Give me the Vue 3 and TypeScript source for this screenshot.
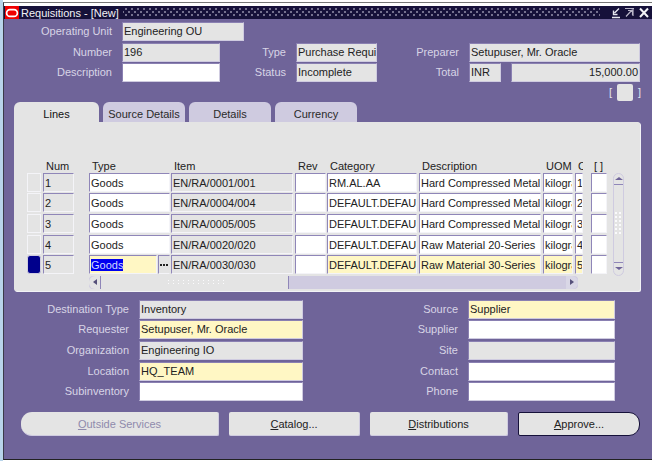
<script setup lang="ts">
interface LineRow {
  num: number;
  item: string;
  category: string;
  description: string;
  active?: boolean;
}

const lines: LineRow[] = [
  { num: 1, item: 'EN/RA/0001/001', category: 'RM.AL.AA', description: 'Hard Compressed Metal Sheet' },
  { num: 2, item: 'EN/RA/0004/004', category: 'DEFAULT.DEFAULT', description: 'Hard Compressed Metal Sheet' },
  { num: 3, item: 'EN/RA/0005/005', category: 'DEFAULT.DEFAULT', description: 'Hard Compressed Metal Sheet' },
  { num: 4, item: 'EN/RA/0020/020', category: 'DEFAULT.DEFAULT', description: 'Raw Material 20-Series' },
  { num: 5, item: 'EN/RA/0030/030', category: 'DEFAULT.DEFAULT', description: 'Raw Material 30-Series', active: true },
];

const tabs = ['Lines', 'Source Details', 'Details', 'Currency'];

interface LowerField {
  label: string;
  value: string;
  tone: string;
}

const leftFields: LowerField[] = [
  { label: 'Destination Type', value: 'Inventory', tone: 'ro' },
  { label: 'Requester', value: 'Setupuser, Mr. Oracle', tone: 'req' },
  { label: 'Organization', value: 'Engineering IO', tone: 'ro' },
  { label: 'Location', value: 'HQ_TEAM', tone: 'req' },
  { label: 'Subinventory', value: '', tone: 'edit' },
];

const rightFields: LowerField[] = [
  { label: 'Source', value: 'Supplier', tone: 'req' },
  { label: 'Supplier', value: '', tone: 'edit' },
  { label: 'Site', value: '', tone: 'ro' },
  { label: 'Contact', value: '', tone: 'edit' },
  { label: 'Phone', value: '', tone: 'edit' },
];
</script>

<template>
  <div class="screen">
    <div class="window">
      <div class="titlebar">
        <svg class="logo" width="14" height="14" viewBox="0 0 14 14">
          <rect width="14" height="14" fill="#f00000" />
          <rect x="1.6" y="3.6" width="10.8" height="6.8" rx="3.4" fill="none" stroke="#fff" stroke-width="1.7" />
        </svg>
        <span class="title">Requisitions - [New]</span>
        <div class="dots"></div>
        <svg class="controls" width="38" height="12" viewBox="0 0 38 12">
          <path d="M1 10.5h8M8 1.5L3.5 6M2.5 3.5V7.5H6.5" fill="none" stroke="#e8e8f0" stroke-width="1.4" />
          <path d="M14 1.5h9M22 1.5V9M21 3L15 9.5M17 3.5h4.5V8" fill="none" stroke="#b9b6c8" stroke-width="1.2" />
          <path d="M29 1.5l8 8.5M37 1.5l-8 8.5" fill="none" stroke="#f4f4f8" stroke-width="2" />
        </svg>
      </div>

      <div class="form">
        <div class="row">
          <span class="label w-a">Operating Unit</span>
          <span class="field ro f-ou">Engineering OU</span>
        </div>
        <div class="row">
          <span class="label w-a">Number</span>
          <span class="field ro f-num">196</span>
          <span class="label w-b">Type</span>
          <span class="field ro f-type">Purchase Requi</span>
          <span class="label w-c">Preparer</span>
          <span class="field ro f-prep">Setupuser, Mr. Oracle</span>
        </div>
        <div class="row">
          <span class="label w-a">Description</span>
          <span class="field edit f-num"></span>
          <span class="label w-b">Status</span>
          <span class="field ro f-type">Incomplete</span>
          <span class="label w-c">Total</span>
          <span class="field ro f-cur">INR</span>
          <span class="field ro f-total">15,000.00</span>
        </div>
        <div class="flex-row">
          <span class="bracket">[</span>
          <span class="flex-box"></span>
          <span class="bracket">]</span>
        </div>

        <div class="tabs">
          <div v-for="(tab, i) in tabs" :key="tab" class="tab" :class="{ current: i === 0 }">{{ tab }}</div>
        </div>

        <div class="panel">
          <div class="table-wrap">
            <div class="table">
              <div class="head">
                <span class="c-sel"></span>
                <span class="c-num">Num</span>
                <span class="c-type">Type</span>
                <span class="c-item">Item</span>
                <span class="c-rev">Rev</span>
                <span class="c-cat">Category</span>
                <span class="c-desc">Description</span>
                <span class="c-uom">UOM</span>
                <span class="c-qty">C</span>
                <span class="c-flex">[ ]</span>
              </div>
              <div v-for="line in lines" :key="line.num" class="line">
                <span class="c-sel selector" :class="{ on: line.active }"></span>
                <span class="c-num cell ro">{{ line.num }}</span>
                <template v-if="line.active">
                  <span class="c-type-short cell req"><mark class="selected">Goods</mark></span>
                  <span class="lov"><i class="lov-dots"></i></span>
                </template>
                <span v-else class="c-type cell edit">Goods</span>
                <span class="c-item cell ro">{{ line.item }}</span>
                <span class="c-rev cell edit"></span>
                <span class="c-cat cell" :class="line.active ? 'req' : 'edit'">{{ line.category }}</span>
                <span class="c-desc cell" :class="line.active ? 'req' : 'edit'">{{ line.description }}</span>
                <span class="c-uom cell" :class="line.active ? 'req' : 'edit'">kilograms</span>
                <span class="c-qty cell" :class="line.active ? 'req' : 'edit'">{{ line.num }}</span>
                <span class="c-flex cell edit"></span>
              </div>
              <div class="hscroll">
                <span class="arrow-btn left"><i class="tri-left"></i></span>
                <span class="thumb"><i class="grip-h"></i></span>
                <span class="arrow-btn right"><i class="tri-right"></i></span>
              </div>
            </div>
            <div class="vscroll">
              <span class="v-end top"><i class="tri-up"></i></span>
              <span class="grip-v"></span>
              <span class="v-end bottom"><i class="tri-down"></i></span>
            </div>
          </div>
        </div>

        <div class="lower">
          <div class="lower-col">
            <div v-for="f in leftFields" :key="f.label" class="row">
              <span class="label w-lower-l">{{ f.label }}</span>
              <span class="field f-lower-l" :class="f.tone">{{ f.value }}</span>
            </div>
          </div>
          <div class="lower-col">
            <div v-for="f in rightFields" :key="f.label" class="row">
              <span class="label w-lower-r">{{ f.label }}</span>
              <span class="field f-lower-r" :class="f.tone">{{ f.value }}</span>
            </div>
          </div>
        </div>

        <div class="buttons">
          <button class="btn outside" disabled><u>O</u>utside Services</button>
          <button class="btn catalog"><u>C</u>atalog...</button>
          <button class="btn dist"><u>D</u>istributions</button>
          <button class="btn approve"><u>A</u>pprove...</button>
        </div>
      </div>
    </div>
  </div>
</template>

<style>
body {
  background: #fff;
}
</style>

<style scoped>
.screen {
  width: 652px;
  height: 461px;
  box-sizing: border-box;
  padding: 2px 0 1px 0;
  border-left: 3px solid #b8d4ea;
  overflow: hidden;
  font-family: "Liberation Sans", Arial, sans-serif;
  font-size: 11px;
  color: #222;
}

.window {
  height: 458px;
  box-sizing: border-box;
  border-top: 1px solid #777;
  border-left: 1px solid #3a3a48;
  border-bottom: 1px solid #222;
  display: flex;
  flex-direction: column;
  padding-top: 3px;
  background: #fff;
}

.titlebar {
  height: 13px;
  flex: none;
  background: #16113a;
  display: flex;
  align-items: center;
  padding-left: 1px;
  color: #f2f2f6;
}

.logo {
  flex: none;
}

.title {
  margin-left: 2px;
  width: 100px;
  white-space: nowrap;
  font-size: 11px;
  line-height: 12px;
}

.dots {
  flex: 1;
  height: 9px;
  margin-left: 2px;
  background-image:
    radial-gradient(circle, #a9a6bd 0.6px, transparent 0.9px),
    radial-gradient(circle, #a9a6bd 0.6px, transparent 0.9px);
  background-size: 6px 6px;
  background-position: 0 -2px, 3px 1px;
}

.controls {
  flex: none;
  margin: 0 3px 0 11px;
}

.form {
  flex: 1;
  background: #6f6499;
  padding-top: 3px;
}

.row {
  display: flex;
  height: 20.67px;
  align-items: flex-start;
}

.label {
  color: #d8d4e6;
  text-align: right;
  line-height: 19px;
  white-space: nowrap;
  flex: none;
}

.w-a { width: 108px; margin-right: 10px; }
.w-b { width: 66px; margin-right: 10px; }
.w-c { width: 82px; margin-right: 10px; }
.w-lower-l { width: 125px; margin-right: 10px; }
.w-lower-r { width: 141px; margin-right: 10px; }

.field {
  height: 19px;
  box-sizing: border-box;
  line-height: 16px;
  padding: 0 1px 0 1px;
  flex: none;
  overflow: hidden;
  white-space: nowrap;
  border-style: solid;
  border-width: 1px;
  border-color: #8a80b2 #cfcbe0 #cfcbe0 #8a80b2;
}

.ro { background: #e4e4e4; }
.edit { background: #fff; }
.req { background: #fff7c4; }

.f-ou { width: 122px; }
.f-num { width: 98px; }
.f-type { width: 81px; }
.f-prep { width: 171px; }
.f-cur { width: 32px; }
.f-total { width: 129px; margin-left: 10px; text-align: right; }
.f-lower-l { width: 164px; }
.f-lower-r { width: 147px; }

.flex-row {
  height: 18px;
  display: flex;
  justify-content: flex-end;
  align-items: flex-start;
  padding-right: 11px;
  margin-top: -0.33px;
}

.bracket {
  color: #e4e4ee;
  line-height: 17px;
}

.flex-box {
  width: 16px;
  height: 17px;
  margin: 0 5px;
  background: #e4e4e4;
  border-radius: 2px;
}

.tabs {
  display: flex;
  gap: 4px;
  height: 20px;
  padding-left: 10px;
}

.tab {
  width: 82px;
  background: #cfcbe0;
  border-radius: 6px 6px 0 0;
  text-align: center;
  line-height: 24px;
  color: #2a2a2a;
}

.tab.current {
  width: 85px;
  background: #e4e4e4;
  color: #111;
}

.panel {
  width: 626px;
  height: 169px;
  margin-left: 10px;
  background: #e4e4e4;
  border-radius: 0 2px 2px 2px;
  box-sizing: border-box;
  padding: 37px 0 0 13px;
  box-shadow: 1px 1px 0 #f2f2f6;
}

.table-wrap {
  display: flex;
}

.head {
  display: flex;
  height: 14px;
  line-height: 15px;
  color: #222;
  white-space: nowrap;
  overflow: visible;
}

.head span {
  padding-left: 3px;
  box-sizing: border-box;
  overflow: hidden;
}

.line {
  display: flex;
  height: 20.67px;
}

.cell {
  height: 19px;
  box-sizing: border-box;
  line-height: 19px;
  padding: 0 0 0 1px;
  overflow: hidden;
  white-space: nowrap;
  flex: none;
  border-style: solid;
  border-width: 1px;
  border-color: #8f86b8 #f4f4f8 #f4f4f8 #8f86b8;
}

.c-sel { width: 14px; flex: none; }
.c-num { width: 31px; margin-left: 2px; flex: none; }
.c-type { width: 81px; margin-left: 15px; flex: none; }
.c-type-short { width: 68px; margin-left: 15px; }
.c-item { width: 122px; margin-left: 1px; flex: none; }
.c-rev { width: 31px; margin-left: 2px; flex: none; }
.c-cat { width: 90px; margin-left: 1px; flex: none; }
.c-desc { width: 122px; margin-left: 2px; flex: none; }
.c-uom { width: 30px; margin-left: 2px; flex: none; }
.c-qty { width: 8px; margin-left: 2px; flex: none; }
.c-flex { width: 16px; margin-left: 8px; flex: none; }

.selector {
  height: 19px;
  background: #e4e4e4;
  border: 1px solid #f4f4f8;
  box-sizing: border-box;
}

.selector.on {
  background: #00008c;
  border-color: #d0cce0;
  border-radius: 3px;
}

.selected {
  background: #0000f0;
  color: #cfd8ff;
}

.lov {
  width: 12px;
  height: 19px;
  margin-left: 1px;
  flex: none;
  box-sizing: border-box;
  background: #e4e4e4;
  border: 1px solid #f4f4f8;
  border-color: #8f86b8 #e4e4e4 #f4f4f8 #8f86b8;
  display: flex;
  align-items: center;
  justify-content: center;
}

.lov-dots {
  width: 8px;
  height: 2px;
  background-image: repeating-linear-gradient(90deg, #222 0 2px, transparent 2px 3px);
}

.hscroll {
  display: flex;
  width: 489px;
  height: 13px;
  margin: 0 0 0 62px;
  background: #cfcbe0;
  border-radius: 4px;
}

.arrow-btn {
  width: 12px;
  flex: none;
  background: #e4e4e4;
  display: flex;
  align-items: center;
  justify-content: center;
}

.arrow-btn.left {
  border-radius: 6px 0 0 6px;
  border-right: 1px solid #8f86b8;
  box-sizing: border-box;
}

.arrow-btn.right {
  margin-left: auto;
  background: #d9d7e6;
  border-radius: 0 6px 6px 0;
}

.thumb {
  width: 188px;
  background: #e4e4e4;
  border-right: 1px solid #8f86b8;
  display: flex;
  justify-content: flex-end;
  align-items: center;
  padding-right: 62px;
  box-sizing: border-box;
}

.grip-h {
  width: 60px;
  height: 6px;
  background-image:
    radial-gradient(circle, #fbfbfd 0.7px, transparent 0.9px);
  background-size: 5px 3px;
}

.tri-left,
.tri-right,
.tri-up,
.tri-down {
  width: 0;
  height: 0;
  display: block;
}

.tri-left {
  border-top: 3px solid transparent;
  border-bottom: 3px solid transparent;
  border-right: 4px solid #55507a;
}

.tri-right {
  border-top: 3px solid transparent;
  border-bottom: 3px solid transparent;
  border-left: 4px solid #55507a;
}

.tri-up {
  border-left: 4px solid transparent;
  border-right: 4px solid transparent;
  border-bottom: 3px solid #6f6499;
}

.tri-down {
  border-left: 4px solid transparent;
  border-right: 4px solid transparent;
  border-top: 3px solid #6f6499;
}

.vscroll {
  width: 11px;
  height: 103px;
  margin: 14px 0 0 6px;
  box-sizing: border-box;
  border: 1px solid #cfcbe0;
  border-radius: 6px;
  display: flex;
  flex-direction: column;
  justify-content: space-between;
  align-items: center;
  background: #e4e4e4;
}

.v-end {
  width: 100%;
  height: 10px;
  flex: none;
  display: flex;
  align-items: center;
  justify-content: center;
}

.v-end.top { border-bottom: 1px solid #8f86b8; height: 10px; }
.v-end.bottom { border-top: 1px solid #8f86b8; height: 12px; }

.grip-v {
  width: 9px;
  height: 24px;
  background-image: radial-gradient(circle, #fbfbfd 0.7px, transparent 0.9px);
  background-size: 4px 4px;
}

.lower {
  display: flex;
  margin-top: 9px;
}

.lower-col:first-child {
  width: 302px;
}

.lower-col:last-child {
  margin-left: 11px;
}

.buttons {
  display: flex;
  margin: 9px 0 0 17px;
  gap: 10px;
}

.btn {
  height: 24px;
  font: inherit;
  color: #222;
  background: #e4e4e4;
  border: none;
  padding: 1px 0 0;
  border-radius: 2px;
  border-bottom: 1px solid #cfcbe0;
  border-right: 1px solid #cfcbe0;
  box-sizing: border-box;
}

.outside {
  width: 198px;
  border-radius: 11px 2px 2px 11px;
  color: #8f8aac;
}

.catalog {
  width: 131px;
}

.dist {
  width: 138px;
}

.approve {
  width: 122px;
  border: 1px solid #16113a;
  border-radius: 2px 11px 11px 2px;
}
</style>
